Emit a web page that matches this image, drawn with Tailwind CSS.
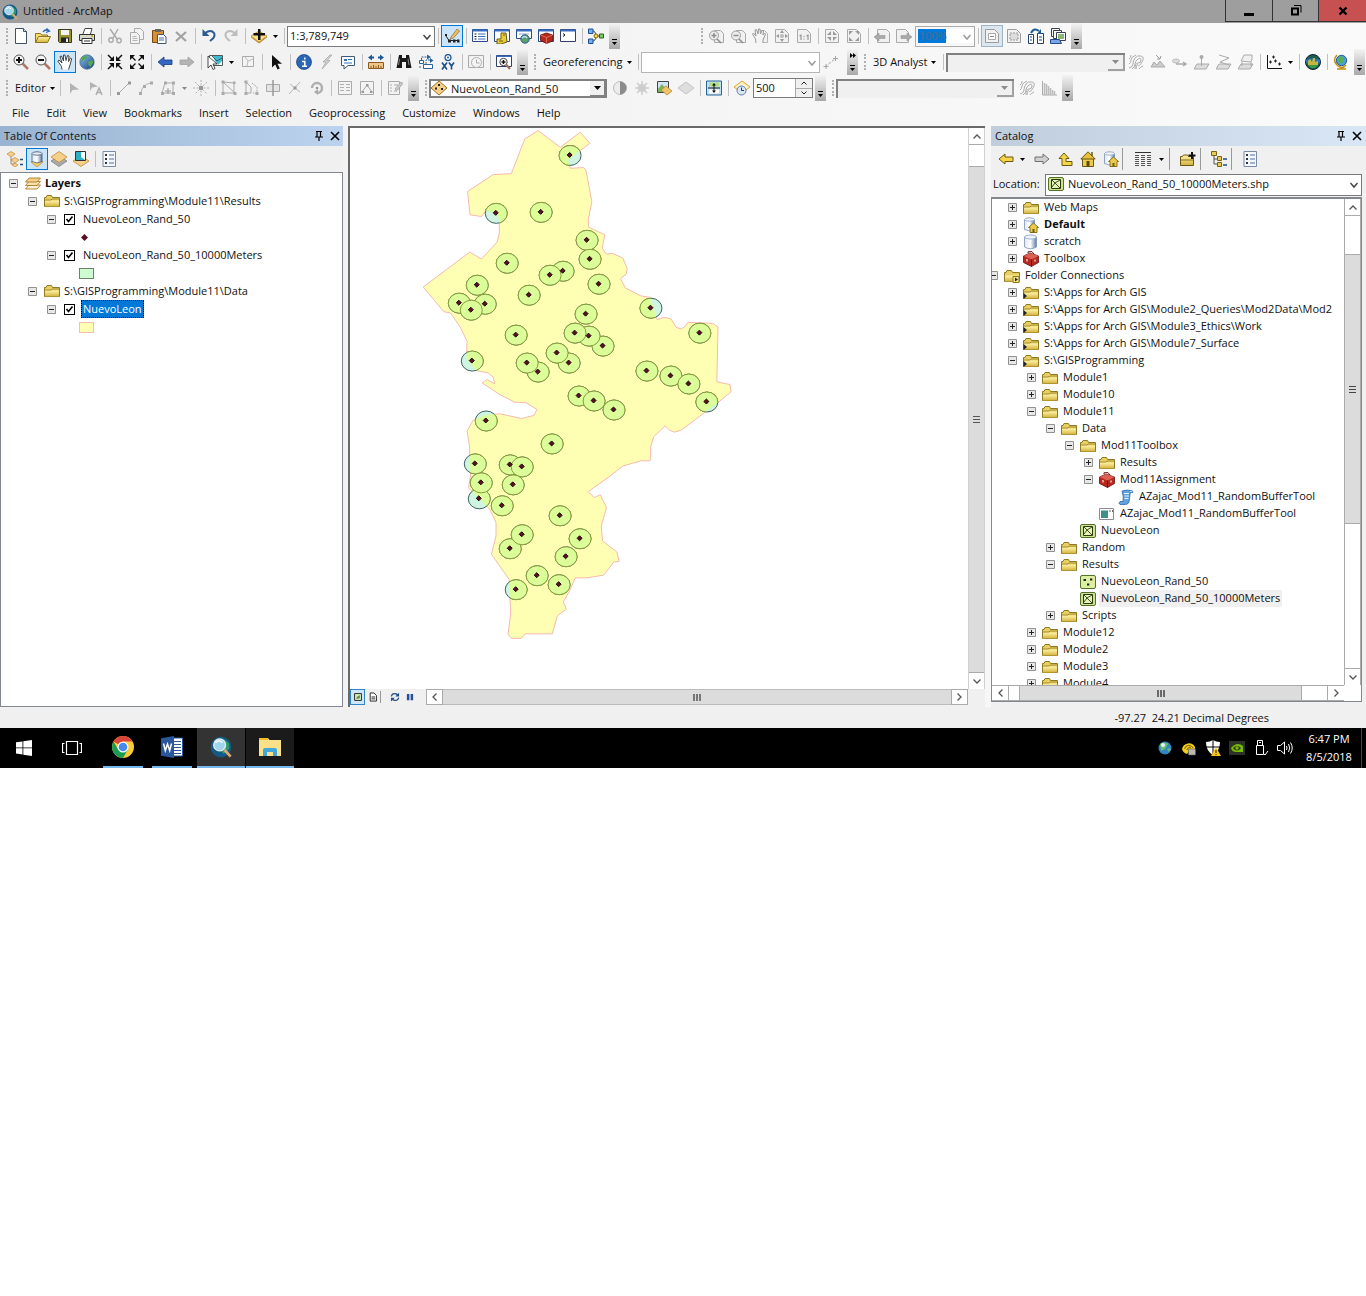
<!DOCTYPE html>
<html lang="en">
<head>
<meta charset="utf-8">
<title>Untitled - ArcMap</title>
<script src="https://cdn.jsdelivr.net/npm/@tailwindcss/browser@4"></script>
</head>
<body class="min-h-screen bg-white font-['Open_Sans','Noto_Sans',sans-serif] text-[11px] text-[#111]">

<svg class="absolute size-0" aria-hidden="true">
  <defs>
    <linearGradient id="gGlobe" x1="0" y1="0" x2="1" y2="1"><stop offset="0" stop-color="#8ec6ee"/><stop offset="1" stop-color="#123f80"/></linearGradient>
    <linearGradient id="gFold" x1="0" y1="0" x2="0" y2="1"><stop offset="0" stop-color="#fff3a8"/><stop offset="1" stop-color="#d3b23c"/></linearGradient>
    <linearGradient id="gCyl" x1="0" y1="0" x2="1" y2="0"><stop offset="0" stop-color="#dfe9f6"/><stop offset=".5" stop-color="#fff"/><stop offset="1" stop-color="#5a7bb0"/></linearGradient>
  </defs>
  <symbol id="new" viewBox="0 0 16 16"><path d="M2.500 .5h8l3 3v12h-11z" fill="#fff" stroke="#3f4f66"/><path d="M10.500 .5v3h3" fill="#cfdcf0" stroke="#3f4f66"/></symbol>
  <symbol id="open" viewBox="0 0 16 16"><path d="M.5 14.500v-9h5l1 1.500h6v2" fill="#f5dc6e" stroke="#8a7420"/><path d="M.5 14.500l3-6h12l-3 6z" fill="url(#gFold)" stroke="#8a7420"/><path d="M8 4q2-3 5-1.500M11.500 .5l3 2.500-3.500 1.500" fill="none" stroke="#2a66b0" stroke-width="1.300"/></symbol>
  <symbol id="save" viewBox="0 0 16 16"><path d="M1.500 1.500h13v13h-12l-1-1z" fill="#9a9330" stroke="#3b3a1c"/><path d="M4 2h8v5H4z" fill="#f4f4f4"/><path d="M4 9.500h8V14H4z" fill="#222"/><path d="M9 10.500h2V14H9z" fill="#eee"/></symbol>
  <symbol id="print" viewBox="0 0 16 16"><path d="M4 6l2-5.500h7L11.500 6" fill="#fff" stroke="#444"/><path d="M.5 6.500h15v6H.5z" fill="#d8d8cc" stroke="#333"/><path d="M3 10.500h10v5H3z" fill="#fff" stroke="#333"/><path d="M5 13h6" stroke="#333"/><path d="M12 8h2" stroke="#c9a800" stroke-width="1.500"/></symbol>
  <symbol id="cut" viewBox="0 0 16 16"><g fill="none" stroke="#a9a9a9" stroke-width="1.400"><path d="M3 1l7 10M11 1L6 10"/><circle cx="4" cy="12" r="2.200"/><circle cx="12" cy="12.500" r="2.200"/></g></symbol>
  <symbol id="copy" viewBox="0 0 16 16"><g fill="#f3f3f3" stroke="#a9a9a9"><path d="M5.500 .5h6l3 3v8h-9z"/><path d="M1.500 4.500h6l3 3v8h-9z"/></g><path d="M3.500 8.500h4M3.500 10.500h5M3.500 12.500h5" stroke="#b5b5b5"/></symbol>
  <symbol id="paste" viewBox="0 0 16 16"><path d="M1.500 2.500h11v12h-11z" fill="#d79035" stroke="#7a4a10"/><path d="M4 1h6v3H4z" fill="#666"/><path d="M6.500 6.500h6l2.500 2.500v6.500H6.500z" fill="#fff" stroke="#40557a"/><path d="M8 10h5M8 12h5" stroke="#4a6ea8"/></symbol>
  <symbol id="del" viewBox="0 0 16 16"><path d="M3 4l10 9M13 4L3 13" stroke="#a2a2a2" stroke-width="2.200"/></symbol>
  <symbol id="undo" viewBox="0 0 16 16"><path d="M4 5q6-4 9 0 2 4-4 8" fill="none" stroke="#2b5a94" stroke-width="2"/><path d="M1.500 1v7h7z" fill="#2b5a94"/></symbol>
  <symbol id="redo" viewBox="0 0 16 16"><path d="M12 5Q6 1 3 5q-2 4 4 8" fill="none" stroke="#bdbdbd" stroke-width="2"/><path d="M14.500 1v7h-7z" fill="#bdbdbd"/></symbol>
  <symbol id="adddata" viewBox="0 0 16 16"><path d="M0 8v1.500l8 6 8-6V8l-8 6z" fill="#b98a34"/><path d="M0 8l8-5 8 5-8 6z" fill="#ffe08a" stroke="#c99a3c"/><path d="M7 1h2.500v4H14v2.500H9.500V12H7V7.500H2.500V5H7z" fill="#111"/></symbol>
  <symbol id="edtool" viewBox="0 0 16 16"><path d="M2 8l3 4.500h9" fill="none" stroke="#222"/><path d="M1 6h2v2H1zM4 11.500h3v3H4zM9 11.500h2.500v3H9zM13 11.500h2.500v3H13z" fill="#222"/><path d="M7 9l6-8 2.500 2-6 7-3 1z" fill="#f0c060" stroke="#8a6a30" stroke-width=".7"/></symbol>
  <symbol id="wtoc" viewBox="0 0 16 16"><path d="M.5 1.500h15v12H.5z" fill="#fff" stroke="#274b8c"/><path d="M.5 1.500h15v2H.5z" fill="#3a6cc0"/><path d="M2.500 6h2M2.500 8.500h2M2.500 11h2" stroke="#111"/><path d="M6 6h7.500M6 8.500h7.500M6 11h7.500" stroke="#3a6cc0"/></symbol>
  <symbol id="wcat" viewBox="0 0 16 16"><path d="M.5 1.500h15v12H.5z" fill="#fff" stroke="#274b8c"/><path d="M.5 1.500h15v2H.5z" fill="#3a6cc0"/><path d="M7 5h5l1 9-6 2H3v-5h4z" fill="#e8cc38" stroke="#6b5a10"/><path d="M5 13h4M9 7h2" stroke="#6b5a10"/></symbol>
  <symbol id="wsearch" viewBox="0 0 16 16"><path d="M.5 1.500h15v9H.5z" fill="#fff" stroke="#274b8c"/><path d="M.5 1.500h15v2H.5z" fill="#3a6cc0"/><path d="M3 6h10" stroke="#90a8c8"/><circle cx="9" cy="11" r="4.200" fill="#5aa070" stroke="#2a5a80"/><path d="M6 10q3-3 5 0" fill="none" stroke="#bfe0f5" stroke-width="1.500"/></symbol>
  <symbol id="wtool" viewBox="0 0 16 16"><path d="M.5 1.500h15v12H.5z" fill="#fff" stroke="#274b8c"/><path d="M.5 1.500h15v2H.5z" fill="#3a6cc0"/><path d="M2.500 7l6-2 6 2v6l-6 2.500-6-3z" fill="#b8261c" stroke="#5e0e0a" stroke-width=".8"/><path d="M2.500 7l6 2.500 6-2.500M8.500 9.500v6" fill="none" stroke="#ef8a7e" stroke-width=".7"/></symbol>
  <symbol id="wpy" viewBox="0 0 16 16"><path d="M.5 1.500h15v12H.5z" fill="#fff" stroke="#333f66"/><path d="M.5 1.500h15v2H.5z" fill="#3a6cc0"/><path d="M3 5.500l2 1.500-2 1.500" fill="none" stroke="#111"/></symbol>
  <symbol id="model" viewBox="0 0 16 16"><path d="M4 3q4 0 4 5M4 13q4 0 4-5h5" fill="none" stroke="#333"/><path d="M.5 1h4.500v4.500H.5zM.5 11h4.500v4.500H.5z" fill="#6fb1f0" stroke="#1f4f94"/><circle cx="8" cy="8" r="2" fill="#f5d64a" stroke="#8a6a10"/><path d="M11.500 6h4v4h-4z" fill="#7ccb62" stroke="#2a6a20"/></symbol>
  <symbol id="lzin" viewBox="0 0 16 16"><path d="M6.500 2.500h6l3 3v9h-9z" fill="#f1f1f1" stroke="#a9a9a9"/><circle cx="6" cy="7.500" r="4.500" fill="#eee" stroke="#9c9c9c"/><path d="M3.500 7.500h5M6 5v5M9 11l4 4" stroke="#8d8d8d" stroke-width="1.500"/></symbol>
  <symbol id="lzout" viewBox="0 0 16 16"><path d="M6.500 2.500h6l3 3v9h-9z" fill="#f1f1f1" stroke="#a9a9a9"/><circle cx="6" cy="7.500" r="4.500" fill="#eee" stroke="#9c9c9c"/><path d="M3.500 7.500h5M9 11l4 4" stroke="#8d8d8d" stroke-width="1.500"/></symbol>
  <symbol id="lpan" viewBox="0 0 16 16"><path d="M6.500 2.500h6l3 3v9h-9z" fill="#f1f1f1" stroke="#b5b5b5"/><path d="M4 15l-.5-4-3-5 1-1 2.500 3L3 2l1.500-.5L6 6l.5-5H8l.5 5L10 2.500h1.500L11 7l1.500-2L13.500 6 11 12v3" fill="#f4f4f4" stroke="#999"/></symbol>
  <symbol id="lfull" viewBox="0 0 16 16"><path d="M1.500 1.500h9l4 4v9h-13z" fill="#f1f1f1" stroke="#aaa"/><path d="M8 2l2 3H6zM8 14l2-3H6zM2 8l3-2v4zM14 8l-3-2v4z" fill="#999"/><circle cx="8" cy="8" r="2" fill="#bbb"/></symbol>
  <symbol id="l11" viewBox="0 0 16 16"><path d="M1.500 1.500h9l4 4v9h-13z" fill="#f1f1f1" stroke="#aaa"/><path d="M3.500 8l1.500-1v5M10.500 8l1.500-1v5M8 8v1M8 10.500v1" stroke="#999" stroke-width="1.200" fill="none"/></symbol>
  <symbol id="lfixin" viewBox="0 0 16 16"><path d="M1.500 1.500h9l4 4v9h-13z" fill="#f1f1f1" stroke="#aaa"/><path d="M7 3v4H3zM9 3v4h4zM7 13V9H3zM9 13V9h4z" fill="#999"/></symbol>
  <symbol id="lfixout" viewBox="0 0 16 16"><path d="M1.500 1.500h9l4 4v9h-13z" fill="#f1f1f1" stroke="#aaa"/><path d="M3 3h4L3 7zM13 3H9l4 4zM3 13h4L3 9zM13 13H9l4-4z" fill="#999"/></symbol>
  <symbol id="lback" viewBox="0 0 16 16"><path d="M3.500 1.500h9l3 3v10h-12z" fill="#f1f1f1" stroke="#aaa"/><path d="M0 9l5-4v2.500h6v3H5V13z" fill="#aaa" stroke="#888" stroke-width=".5"/></symbol>
  <symbol id="lfwd" viewBox="0 0 16 16"><path d="M.5 1.500h9l3 3v10H.5z" fill="#f1f1f1" stroke="#aaa"/><path d="M16 9l-5-4v2.500H5v3h6V13z" fill="#aaa" stroke="#888" stroke-width=".5"/></symbol>
  <symbol id="draft" viewBox="0 0 16 16"><path d="M1.500 1.500h9l4 4v9h-13z" fill="#f1f1f1" stroke="#9c9c9c"/><path d="M4.500 5.500h7v6h-7z" fill="#fff" stroke="#aaa"/><path d="M6 8.500h4" stroke="#888"/></symbol>
  <symbol id="focus" viewBox="0 0 16 16"><path d="M1.500 1.500h9l4 4v9h-13z" fill="#f1f1f1" stroke="#9c9c9c"/><path d="M4 5h8v7H4z" fill="#ddd" stroke="#999" stroke-dasharray="2 1"/></symbol>
  <symbol id="chlay" viewBox="0 0 16 16"><path d="M.5 6.500h5v9h-5zM9.500 5.500h6v10h-6z" fill="#fff" stroke="#2e3f66"/><path d="M2 9h2M2 12h2M11 9h3M11 12h3" stroke="#5b83b8" stroke-width="1.500"/><path d="M3 5q3-6 8-2" fill="none" stroke="#1d5b96" stroke-width="2"/><path d="M13 1v5H9z" fill="#1d5b96"/></symbol>
  <symbol id="ddp" viewBox="0 0 16 16"><g fill="#fff" stroke="#3a3f4d"><path d="M1.500 .5h8v8h-8z"/><path d="M3.500 2.500h8v8h-8z"/><path d="M6.500 4.500h9v8h-9z"/></g><path d="M8 6h6v5H8z" fill="#8db57a"/><path d="M.5 11.500h9l2 4H.5z" fill="#7aa6e6" stroke="#244a92"/></symbol>
  <symbol id="zin" viewBox="0 0 16 16"><path d="M9.500 9.500l5.500 5.500" stroke="#b07a6a" stroke-width="2.500"/><circle cx="6" cy="6" r="5" fill="#f4f4f4" stroke="#555"/><path d="M3 6h6M6 3v6" stroke="#111" stroke-width="2"/></symbol>
  <symbol id="zout" viewBox="0 0 16 16"><path d="M9.500 9.500l5.500 5.500" stroke="#b07a6a" stroke-width="2.500"/><circle cx="6" cy="6" r="5" fill="#f4f4f4" stroke="#555"/><path d="M3 6h6" stroke="#111" stroke-width="2"/></symbol>
  <symbol id="pan" viewBox="0 0 16 16"><path d="M5 15.500l-.5-3L.8 7 2 6l3 3L3 2.500 4.500 2l2 5L6.500 1H8l1 5.500L10.500 1.500 12 2l-.5 5.500L13.500 4l1.200.8L13 11l-1.500 4.500" fill="#fff" stroke="#333" stroke-width=".9"/></symbol>
  <symbol id="globe" viewBox="0 0 16 16"><circle cx="8" cy="8" r="7.200" fill="url(#gGlobe)" stroke="#2a4f80" stroke-width=".6"/><path d="M3 3.500q3-2.500 5-2l-1 3.500-3 1-1.500 3q-1-3 .5-5.500zM9 8l4-2 1.500 2-3 5-2-2z" fill="#5aa84a"/></symbol>
  <symbol id="fixin" viewBox="0 0 16 16"><path d="M7 2v5H2zM9 2v5h5zM7 14V9H2zM9 14V9h5z" fill="#111"/><path d="M1 1l4 4M15 1l-4 4M1 15l4-4M15 15l-4-4" stroke="#111" stroke-width="1.500"/></symbol>
  <symbol id="fixout" viewBox="0 0 16 16"><path d="M1 1h5L1 6zM15 1h-5l5 5zM1 15h5l-5-5zM15 15h-5l5-5z" fill="#111"/><path d="M3 3l3.500 3.500M13 3L9.500 6.500M3 13l3.500-3.500M13 13L9.500 9.500" stroke="#111" stroke-width="1.300"/></symbol>
  <symbol id="back" viewBox="0 0 16 16"><path d="M1 8l6-5v3h8v4.500H7V13z" fill="#3568c4" stroke="#173a80" stroke-width=".8"/></symbol>
  <symbol id="fwd" viewBox="0 0 16 16"><path d="M15 8L9 3v3H1v4.500h8V13z" fill="#b4b4b4" stroke="#a0a0a0" stroke-width=".8"/></symbol>
  <symbol id="selfeat" viewBox="0 0 16 16"><path d="M2.500 1.500h13v10h-13z" fill="#fff" stroke="#555"/><path d="M6 2h9v5l-4 4-3-4z" fill="#3fbcd0"/><path d="M5 2l5 5 5-3" fill="none" stroke="#24606e"/><path d="M1 2v12l3-3 2 4.500 2-1L6 10h4z" fill="#fff" stroke="#222" stroke-width=".8"/></symbol>
  <symbol id="clrsel" viewBox="0 0 16 16"><path d="M2.500 2.500h11v10h-11z" fill="#f4f4f4" stroke="#aaa"/><path d="M5 3l3 4 5-2M8 7l-1 5" fill="none" stroke="#bbb"/></symbol>
  <symbol id="arrow" viewBox="0 0 16 16"><path d="M4 1v12.500l3.200-3 2.300 5 2.300-1-2.300-4.800H14z" fill="#111"/></symbol>
  <symbol id="ident" viewBox="0 0 16 16"><circle cx="8" cy="8" r="7.500" fill="#2a66b8" stroke="#143c7c" stroke-width=".7"/><path d="M8.800 3.500v2M6 7.500h2.800V12M6 12.200h5" stroke="#fff" stroke-width="1.600" fill="none"/></symbol>
  <symbol id="hyper" viewBox="0 0 16 16"><path d="M12 1L5 8h3l-4 7 8-8.500H9L14 1z" fill="#d0d0d0" stroke="#aaa" stroke-width=".8"/></symbol>
  <symbol id="popup" viewBox="0 0 16 16"><path d="M1.500 2.500h13v9H8l-4 3.500v-3.500H1.500z" fill="#fff" stroke="#3c5a78"/><path d="M4 5h3v2H4z" fill="#2d74b8"/><path d="M8 5.500h4M4 9h8" stroke="#2d74b8"/></symbol>
  <symbol id="measure" viewBox="0 0 16 16"><path d="M.5 8.500h15v6H.5z" fill="#f0c489" stroke="#8a5a20"/><path d="M3 12v2M5.500 11v3M8 12v2M10.500 11v3M13 12v2" stroke="#8a5a20"/><path d="M3 3.500h3M10 3.500h3" stroke="#1d5b96" stroke-width="2"/><path d="M0 3.500L4 .5v6zM16 3.500L12 .5v6z" fill="#1d5b96"/></symbol>
  <symbol id="find" viewBox="0 0 16 16"><path d="M3 1h3v3h4V1h3l2.500 13H10V8H6v6H.5z" fill="#1a1a1a"/><path d="M3.500 5L2.500 11M12 5l1 6" stroke="#888"/></symbol>
  <symbol id="route" viewBox="0 0 16 16"><path d="M1.500 6.500h4v3h-4zM5.500 10.500h9v4h-9z" fill="#fff" stroke="#2a6496"/><path d="M3.500 6V3H10M8 10V6h5M1 13h3" stroke="#2a6496" fill="none" stroke-dasharray="2 1"/><path d="M9 .5L13 3 9 5.500zM12 4l3.500 2.500L12 9z" fill="#2a6496"/></symbol>
  <symbol id="goxy" viewBox="0 0 16 16"><circle cx="8" cy="3.500" r="3" fill="#fff" stroke="#1d5b96" stroke-width="1.300"/><circle cx="8" cy="3.500" r="1" fill="#1d5b96"/><path d="M2 8.500l5 7M7 8.500l-5 7M9 8.500l2.500 3.500 2.500-3.500M11.500 12v3.500" stroke="#1d4f86" stroke-width="1.600" fill="none"/></symbol>
  <symbol id="time" viewBox="0 0 16 16"><path d="M.5 1.500h15v12H.5z" fill="#f2f2f2" stroke="#aaa"/><circle cx="8.500" cy="8.500" r="5" fill="#f4f4f4" stroke="#b0b0b0"/><path d="M8.500 5.500v3.500h3" stroke="#aaa" fill="none"/></symbol>
  <symbol id="viewer" viewBox="0 0 16 16"><path d="M.5 1.500h15v11H.5z" fill="#fff" stroke="#333f66"/><path d="M.5 1.500h15v1.500H.5z" fill="#3a6cc0"/><circle cx="7.500" cy="8" r="3.700" fill="#fff" stroke="#444"/><path d="M5.500 8h4M7.500 6v4" stroke="#111" stroke-width="1.400"/><path d="M10.500 11l3.500 4" stroke="#a06a5a" stroke-width="2"/></symbol>
  <symbol id="ctrl" viewBox="0 0 16 16"><path d="M2 13L13 4" stroke="#a8a8a8" stroke-dasharray="3 1.500"/><path d="M.5 12.500h5M3 10v5M10 4.500h5M12.500 2v5" stroke="#a8a8a8"/></symbol>
  <symbol id="contour" viewBox="0 0 16 16"><g fill="none" stroke="#adadad"><path d="M1 14q4-1 4-4t2-6 6-2 1 6-4 3-2 4"/><path d="M4 15q3-2 3-5t3-5 3 1-3 3-3 6"/><path d="M1 10q2-1 2-4t5-5M1 5q2-1 2-4M11 15q1-2 4-3"/></g></symbol>
  <symbol id="steep" viewBox="0 0 16 16"><path d="M1 13l3-5 3 3 3-4 5 6z" fill="#ccc" stroke="#aaa"/><path d="M6 1l4 4M10 5l1-3M10 5H7" stroke="#999"/></symbol>
  <symbol id="los" viewBox="0 0 16 16"><ellipse cx="4" cy="7" rx="3.500" ry="2" fill="#ddd" stroke="#bbb"/><path d="M4 10h10M11 8l3 2-3 2" stroke="#aaa" stroke-width="1.500" fill="none"/></symbol>
  <symbol id="ipt" viewBox="0 0 16 16"><path d="M3 10h12l-3 5H0z" fill="#ddd" stroke="#aaa"/><path d="M7.500 4v8" stroke="#aaa"/><circle cx="7.500" cy="3" r="2" fill="#aaa"/></symbol>
  <symbol id="iline" viewBox="0 0 16 16"><path d="M3 10h12l-3 5H0z" fill="#ddd" stroke="#aaa"/><path d="M3 1l10 3-9 4 9 3" fill="none" stroke="#aaa"/></symbol>
  <symbol id="ipoly" viewBox="0 0 16 16"><path d="M3 10h12l-3 5H0z" fill="#ddd" stroke="#aaa"/><path d="M3 7l3-6h8v5l-2 2zM4 8v4M13 7v5" fill="#f0f0f0" stroke="#aaa"/></symbol>
  <symbol id="graph" viewBox="0 0 16 16"><path d="M1.500 1v13.500H16" fill="none" stroke="#111"/><path d="M3 8h3M4.500 6.500v3M6 3h3M7.500 1.500v3M8 7h3M9.500 5.500v3M12 10h3M13.500 8.500v3" stroke="#222"/></symbol>
  <symbol id="scene" viewBox="0 0 16 16"><circle cx="8" cy="8" r="7.500" fill="#1c5d54" stroke="#123"/><path d="M1 8q7-3 14 0" stroke="#2a76c0" stroke-width="4" fill="none"/><path d="M3 7l2-2 2 3 1-4h2v4l3-1v4H3z" fill="#c6b440"/><path d="M3 11h10l-3 3H6z" fill="#3c9a44"/></symbol>
  <symbol id="arcglobe" viewBox="0 0 16 16"><circle cx="8.500" cy="6.500" r="5.200" fill="#4b9fdc" stroke="#1d5b96"/><path d="M7 2l4 2-1 4-3 2-2-4z" fill="#58b04a"/><path d="M4 1q-5 5 0 10t9 0M8 13v2M4 15h9" fill="none" stroke="#c58e10" stroke-width="1.500"/></symbol>
  <symbol id="ea" viewBox="0 0 16 16"><path d="M4 3v11l2.500-4 6.500-.5z" fill="#b3b3b3"/></symbol>
  <symbol id="eann" viewBox="0 0 16 16"><path d="M2 2v9l2-3.500 6-1z" fill="#b3b3b3"/><path d="M8 15l3-7 3 7M9 12.500h4" stroke="#aaa" stroke-width="1.400" fill="none"/></symbol>
  <symbol id="sline" viewBox="0 0 16 16"><path d="M3 13L13 3" stroke="#aaa"/><path d="M1 12h3v3H1zM12 1.500h3v3h-3z" fill="#999"/></symbol>
  <symbol id="sarc" viewBox="0 0 16 16"><path d="M3 13Q4 4 13 3" stroke="#b5b5b5" fill="none"/><path d="M1 12h3v3H1zM5 5h3v3H5zM12 1.500h3v3h-3z" fill="#aaa"/></symbol>
  <symbol id="strace" viewBox="0 0 16 16"><path d="M2 13L5 3h8v10z" fill="none" stroke="#aaa"/><path d="M4 1.500h3v3H4zM12 1.500h3v3h-3zM1 12h3v3H1zM12 12h3v3h-3z" fill="#aaa"/><path d="M5 11h6M8 8v6" stroke="#999"/></symbol>
  <symbol id="spoint" viewBox="0 0 16 16"><path d="M8 0v16M0 8h16M2 2l12 12M14 2L2 14" stroke="#b0b0b0" stroke-dasharray="2 1.500"/><path d="M6 6h4v4H6z" fill="#999"/></symbol>
  <symbol id="evert" viewBox="0 0 16 16"><path d="M2 2v11h12zM2 2l11 1v10" fill="none" stroke="#aaa"/><path d="M.5 .5h3v3h-3zM12 1.500h2.500V4H12zM.5 12h3v3h-3zM12.500 12h3v3h-3z" fill="#aaa"/></symbol>
  <symbol id="reshape" viewBox="0 0 16 16"><path d="M3 2v11h5V7z" fill="none" stroke="#aaa"/><path d="M9 3l5 4v6h-4" stroke="#aaa" stroke-dasharray="2 1" fill="none"/><path d="M1.500 .5h3v3h-3zM1.500 12h3v3h-3zM12.500 12h3v3h-3z" fill="#aaa"/></symbol>
  <symbol id="cutp" viewBox="0 0 16 16"><path d="M1.500 4.500h13v7h-13z" fill="#e4e4e4" stroke="#aaa"/><path d="M8 0v16" stroke="#999" stroke-width="1.500"/></symbol>
  <symbol id="split" viewBox="0 0 16 16"><path d="M2 14L13 2M3 4l10 8" stroke="#b5b5b5"/><path d="M6.500 6.500h3v3h-3z" fill="#999"/></symbol>
  <symbol id="rotate" viewBox="0 0 16 16"><path d="M3 8a5 5 0 1 1 6 5" fill="none" stroke="#b0b0b0" stroke-width="2.500"/><path d="M9 9v6l-4-3z" fill="#aaa"/><circle cx="8" cy="8" r="1.300" fill="#999"/></symbol>
  <symbol id="attr" viewBox="0 0 16 16"><path d="M1.500 1.500h13v13h-13z" fill="#f3f3f3" stroke="#aaa"/><path d="M3 4.500h4M3 7.500h4M3 10.500h4M9 4.500h4M9 7.500h4M9 10.500h4" stroke="#b0b0b0"/></symbol>
  <symbol id="sprop" viewBox="0 0 16 16"><path d="M1.500 1.500h13v13h-13z" fill="#f3f3f3" stroke="#aaa"/><path d="M3 12l5-7 5 7" fill="none" stroke="#aaa"/><path d="M7 4h2.500v2.500H7zM2.500 11H5v2H2.500zM11 11h2.500v2H11z" fill="#999"/></symbol>
  <symbol id="cfeat" viewBox="0 0 16 16"><path d="M1.500 1.500h11v13h-11z" fill="#f3f3f3" stroke="#aaa"/><path d="M3 5h2M3 8h2M3 11h2M7 5h4M7 11h3" stroke="#aaa"/><path d="M8 9l6-7 2 1.500-6 7z" fill="#ccc" stroke="#999" stroke-width=".7"/></symbol>
  <symbol id="contrast" viewBox="0 0 16 16"><circle cx="8" cy="8" r="6.500" fill="#ececec" stroke="#bbb"/><path d="M8 1.500a6.500 6.500 0 0 1 0 13z" fill="#8c8c8c"/></symbol>
  <symbol id="bright" viewBox="0 0 16 16"><circle cx="8" cy="8" r="4" fill="#d0d0d0"/><path d="M8 1v14M1 8h14M3 3l10 10M13 3L3 13" stroke="#ccc" stroke-width="1.500"/></symbol>
  <symbol id="transp" viewBox="0 0 16 16"><path d="M1.500 1.500h11v11h-11z" fill="#cfe4f4" stroke="#444"/><path d="M2 9l4-5 6 8H2z" fill="#7fb35a"/><path d="M5 10l5-4 6 5-5 4z" fill="#f0c36a" stroke="#b0802a" stroke-width=".7"/></symbol>
  <symbol id="dia" viewBox="0 0 16 16"><path d="M0 8l8-6 8 6-8 6z" fill="#dedede" stroke="#c2c2c2"/></symbol>
  <symbol id="swipe" viewBox="0 0 16 16"><path d="M.5 1h15v14H.5z" fill="#bfe0f5" stroke="#2a6496"/><path d="M3 2.500h10v4H3z" fill="#b4dc80"/><path d="M3 9.500h10v4H3z" fill="#fff"/><path d="M2 8h12M8 4v8" stroke="#111"/><path d="M8 3L6 5.500h4zM8 13l-2-2.500h4z" fill="#111"/></symbol>
  <symbol id="flick" viewBox="0 0 16 16"><path d="M0 7l8-6 8 6-8 6z" fill="#fff1c8" stroke="#e0a030"/><circle cx="7.500" cy="10.500" r="4.500" fill="#d6e6f6" stroke="#5f7fa8"/><path d="M7.500 7.500v3H10" stroke="#335" fill="none"/></symbol>
  <symbol id="hist" viewBox="0 0 16 16"><path d="M1.500 1v14H16" stroke="#aaa" fill="none"/><path d="M3.500 15V3M5.500 15V4M7.500 15V6M9.500 15V8M11.500 15v-5M13.500 15v-4" stroke="#bbb" stroke-width="1.500"/></symbol>

  <symbol id="ldraw" viewBox="0 0 16 16"><path d="M4 6v7h4M4 9h4" fill="none" stroke="#8a8a8a"/><path d="M0 3l4-2.500L8 3 4 6zM4 9l4-2.500L12 9l-4 3zM5 14l3-2 3 2-3 2z" fill="#f6cf88" stroke="#c08a3c" stroke-width=".7"/><path d="M13 8.500h3M13 13.500h3" stroke="#1d4f86" stroke-width="1.700"/></symbol>
  <symbol id="lsource" viewBox="0 0 16 16"><path d="M2 11l6-4 6 4-6 5z" fill="#f6cf68" stroke="#c08a3c" stroke-width=".8"/><path d="M3 2.500q5-3 10 0v8q-5 3-10 0z" fill="url(#gCyl)" stroke="#44577a" stroke-width=".8"/><ellipse cx="8" cy="2.500" rx="5" ry="1.700" fill="#e6eef8" stroke="#44577a" stroke-width=".8"/></symbol>
  <symbol id="lvis" viewBox="0 0 16 16"><path d="M0 10l8-5 8 5-8 5.500z" fill="#aaa" stroke="#777" stroke-width=".7"/><path d="M0 6l8-5.500L16 6l-8 5.500z" fill="#f6cf88" stroke="#c08a3c" stroke-width=".8"/></symbol>
  <symbol id="lsel" viewBox="0 0 16 16"><path d="M0 10l8-5 8 5-8 5.500z" fill="#f6cf88" stroke="#c08a3c" stroke-width=".8"/><path d="M2.500 .5h10v9h-10z" fill="#2eb0c4" stroke="#333"/><path d="M8 1h4v8l-4-3z" fill="#fff"/></symbol>
  <symbol id="opts" viewBox="0 0 16 16"><path d="M2 .5h12.500v15H2z" fill="#f4f8fd" stroke="#7a8ba6"/><path d="M4 3h2v2H4zM4 7h2v2H4zM4 11h2v2H4z" fill="#333"/><path d="M8 4h5M8 8h5M8 12h5" stroke="#4a6ea8"/></symbol>
  <symbol id="layers" viewBox="0 0 16 16"><g stroke="#b07c2c" stroke-width=".9"><path d="M.5 14L4 10h11.500L12 14z" fill="#fff1d2"/><path d="M.5 10.500L4 6.500h11.500L12 10.500z" fill="#fbe0ac"/><path d="M.5 7L4 3h11.500L12 7z" fill="#f6cf88"/></g></symbol>
  <symbol id="folder" viewBox="0 0 16 16"><path d="M.5 13.500v-9h1.500l1-2h4.500l1 2h7v9z" fill="#e9cf62" stroke="#8f7a24"/><path d="M1 13.500v-6h14v6z" fill="url(#gFold)"/><path d="M1 7h6l1-1h7" stroke="#a38e34" fill="none"/></symbol>
  <symbol id="fconn" viewBox="0 0 16 16"><path d="M.5 13.500v-9h1.500l1-2h4.500l1 2h7v9z" fill="#e9cf62" stroke="#8f7a24"/><path d="M1 13.500v-6h14v6z" fill="url(#gFold)"/><path d="M1 7h6l1-1h7" stroke="#a38e34" fill="none"/><path d="M.5 8l3.500 3-3.500 3z" fill="#222"/></symbol>
  <symbol id="fconns" viewBox="0 0 16 16"><path d="M.5 13.500v-9h1.500l1-2h4.500l1 2h7v9z" fill="#e9cf62" stroke="#8f7a24"/><path d="M1 13.500v-6h14v6z" fill="url(#gFold)"/><path d="M9 8.500h6v6H9z" fill="#f6e48a" stroke="#8f7a24"/><path d="M11 9.500l3 2-3 2z" fill="#222"/></symbol>
  <symbol id="db" viewBox="0 0 16 16"><path d="M1.500 3q6-3.500 12 0v10q-6 3.500-12 0z" fill="url(#gCyl)" stroke="#7b91b6" stroke-width=".8"/><ellipse cx="7.500" cy="3" rx="6" ry="2" fill="#eef3fa" stroke="#8fa3c4" stroke-width=".8"/></symbol>
  <symbol id="dbhome" viewBox="0 0 16 16"><path d="M1.500 2.500q5-3 10 0v10q-5 3-10 0z" fill="url(#gCyl)" stroke="#7b91b6" stroke-width=".8"/><ellipse cx="6.500" cy="2.500" rx="5" ry="1.700" fill="#eef3fa" stroke="#8fa3c4" stroke-width=".8"/><path d="M5.500 10.500l5-4.500 5 4.500h-1.500v5H7v-5z" fill="#eccb4a" stroke="#7a6414" stroke-width=".9"/><path d="M9.500 12h2v3.500h-2z" fill="#6b5a10"/></symbol>
  <symbol id="tbx" viewBox="0 0 16 16"><path d="M.5 5L7 2l8.500 3v6.500l-7 4-8-4z" fill="#b8281e" stroke="#641410" stroke-width=".8"/><path d="M.5 5l8 3.500 7-3.500L7 2z" fill="#dd6054"/><path d="M8.500 8.500v7M5 2V.8L9 .6 11 3" stroke="#641410" fill="none"/><path d="M4 8v2.500M12 8.500v2" stroke="#eee" stroke-width="1.200"/></symbol>
  <symbol id="script" viewBox="0 0 16 16"><path d="M4 2q6-2 10 0-2 1-2 3t-1 8q-1 3-5 2.500H2q-2-1 0-3h3q1-5-1-10.500z" fill="#5fa3e2" stroke="#2d68ac" stroke-width=".8"/><path d="M6 4.500h5M6.500 7h4.500M6.500 9.500h4" stroke="#eaf4ff"/><path d="M12 1.500q3-.5 3 2h-3" fill="#cfe4f8" stroke="#2d68ac" stroke-width=".7"/></symbol>
  <symbol id="html" viewBox="0 0 16 16"><path d="M.5 2.500h14v11H.5z" fill="#fff" stroke="#8c8c94"/><path d="M2 4.500h7v7.500H2z" fill="#3f8f8a"/><path d="M10.500 5h1M13 5h1" stroke="#333" stroke-width="1.300"/></symbol>
  <symbol id="shp" viewBox="0 0 16 16"><rect x=".5" y="1.500" width="15" height="13" rx="1.500" fill="#cfe38e" stroke="#55702c"/><path d="M3.500 3.500h9v9h-9z" fill="#e6f4b8" stroke="#2b3a14"/><path d="M4 11l3-4 5-3M7 7L4 4M7 7l3 3 2 2" fill="none" stroke="#2b3a14" stroke-width=".9"/></symbol>
  <symbol id="shppt" viewBox="0 0 16 16"><rect x=".5" y="1.500" width="15" height="13" rx="1.500" fill="#dcefa0" stroke="#55702c"/><path d="M3.500 5H6v2H3.500zM10 4.500h2.300v2H10zM7 9.500h2.300v2H7z" fill="#222"/></symbol>
  <symbol id="yback" viewBox="0 0 16 16"><path d="M1 8l6-5v3h8v4.500H7V13z" fill="#f3d648" stroke="#6b5810"/></symbol>
  <symbol id="yfwd" viewBox="0 0 16 16"><path d="M15 8L9 3v3H1v4.500h8V13z" fill="#d0d0d0" stroke="#707070"/></symbol>
  <symbol id="yup" viewBox="0 0 16 16"><path d="M7 2L2 7.500h3v7h10v-4H9v-3h3z" fill="#f3d648" stroke="#6b5810"/></symbol>
  <symbol id="home" viewBox="0 0 16 16"><path d="M2.500 7v8.500h11V7" fill="#eccb4a" stroke="#6b5810"/><path d="M8 .8L.8 8h14.400z" fill="#e6c038" stroke="#6b5810"/><path d="M6.500 10h3v5.500h-3z" fill="#5a4a0e"/><path d="M12 1v4" stroke="#6b5810" stroke-width="1.500"/></symbol>
  <symbol id="grid" viewBox="0 0 16 16"><path d="M0 1.500h16" stroke="#333"/><path d="M0 4.500h16M0 6.500h16M0 8.500h16M0 10.500h16M0 12.500h16M0 14.500h16" stroke="#555" stroke-dasharray="4 2"/></symbol>
  <symbol id="connect" viewBox="0 0 16 16"><path d="M.5 14.500v-9h2l1-1.500h4l1 1.500h5v9z" fill="url(#gFold)" stroke="#6b5810"/><path d="M1 9h12" stroke="#8a7420"/><path d="M12 1v7M8.500 4.500h7" stroke="#111" stroke-width="2"/></symbol>
  <symbol id="ctree" viewBox="0 0 16 16"><path d="M3 5v8h4M3 8h4" stroke="#555" fill="none"/><path d="M.5 .5h5v4h-5zM6.500 5.500h4v4h-4zM6.500 11.500h4v4h-4z" fill="#e6cc50" stroke="#7a6414"/><path d="M12 8h4M12 14h4" stroke="#1d4f86" stroke-width="1.500"/></symbol>
  <symbol id="arcmap" viewBox="0 0 16 16"><circle cx="8" cy="8" r="7.500" fill="#145a86"/><path d="M9 2q6 2 5 7l-4 4-3-3z" fill="#2f9a6c"/><circle cx="7" cy="6.500" r="4.300" fill="#9fd4ec" stroke="#e4eef4"/><path d="M4 5q3-3 5 0" stroke="#fff" fill="none"/><path d="M10.500 10l4.500 5" stroke="#d8a878" stroke-width="2"/></symbol>
  <symbol id="mapview" viewBox="0 0 16 16"><path d="M2.500 2.500h11v11h-11z" fill="#d8ecc0" stroke="#222" stroke-width="1.500"/><path d="M5 11q1-5 6-6v5z" fill="#5f8f4e"/></symbol>
  <symbol id="layview" viewBox="0 0 16 16"><path d="M3.500 1.500h6l4 4v9h-10z" fill="#fff" stroke="#222" stroke-width="1.500"/><path d="M5.500 8h6M5.500 11h6" stroke="#222" stroke-width="1.500"/></symbol>
  <symbol id="refresh" viewBox="0 0 16 16"><path d="M2 7q2-6 8-4l3 2M14 9q-2 6-8 4l-3-2" fill="none" stroke="#1d4f86" stroke-width="2"/><path d="M14.500 1v6h-6zM1.500 15V9h6z" fill="#1d4f86"/></symbol>
  <symbol id="pause" viewBox="0 0 16 16"><path d="M3 3h4v10H3zM9 3h4v10H9z" fill="#24509a"/></symbol>
</svg>

<div class="w-full bg-linear-to-r from-[#f0f0f0] to-[#fafafa]">
  <header class="flex h-[23px] items-center bg-[#9e9e9e] pl-[2px]">
    <svg class="size-4"><use href="#arcmap"/></svg>
    <h1 class="ml-[5px] flex-1 text-[11px]">Untitled - ArcMap</h1>
    <div class="flex h-[22px] self-start border-b border-l border-[#333]">
      <button aria-label="Minimize" class="grid w-[47px] place-items-center border-r border-[#333]"><svg class="h-4 w-4" viewBox="0 0 16 16"><path d="M3 10h10v3H3z"/></svg></button>
      <button aria-label="Restore" class="grid w-[46px] place-items-center border-r border-[#333]"><svg class="h-4 w-4" viewBox="0 0 16 16"><path d="M4 5.500h6v6H4z" fill="none" stroke="#000" stroke-width="2"/><path d="M6 2.500h7v7" fill="none" stroke="#000"/></svg></button>
      <button aria-label="Close" class="grid w-[47px] place-items-center bg-[#c75050]"><svg class="h-4 w-4" viewBox="0 0 16 16"><path d="M4.500 4.500l7 7M11.500 4.500l-7 7" stroke="#000" stroke-width="2.400"/></svg></button>
    </div>
  </header>

  <div class="flex h-[26px] items-center overflow-hidden pl-1">
    <div class="flex items-center" data-tools="grip,new:New,open:Open,save:Save,print:Print,|,cut:Cut,copy:Copy,paste:Paste,del:Delete,|,undo:Undo,redo:Redo,|,adddata:Add Data,v,|"></div>
    <div class="relative h-[21px] w-[148px]">
      <select aria-label="Map scale" class="h-full w-full appearance-none border border-[#7a7a7a] bg-white pl-[2px]"><option>1:3,789,749</option></select>
      <svg class="pointer-events-none absolute top-[7px] right-1 h-2 w-2" viewBox="0 0 8 8"><path d="M.5 2L4 6l3.500-4" fill="none" stroke="#444" stroke-width="1.500"/></svg>
    </div>
    <div class="flex items-center" data-tools="|,edtool:Editor Toolbar:on,|,wtoc:Table Of Contents,wcat:Catalog,wsearch:Search,wtool:ArcToolbox,wpy:Python,|,model:ModelBuilder,over"></div>
    <div class="ml-[79px] flex items-center" data-tools="grip,lzin:Zoom In,lzout:Zoom Out,lpan:Pan,lfull:Zoom Whole Page,l11:Zoom to 100%,|,lfixin:Fixed Zoom In,lfixout:Fixed Zoom Out,|,lback:Go Back,lfwd:Go Forward"></div>
    <div class="relative h-[21px] w-[60px]">
      <select aria-label="Layout zoom" class="h-full w-full appearance-none border border-[#ababab] bg-[linear-gradient(to_right,#0078d7_28px,#fff_28px)] bg-[position:2px_2px] bg-[length:100%_14px] bg-no-repeat pl-[3px] text-[#4c6f94]"><option>100%</option></select>
      <svg class="pointer-events-none absolute top-[7px] right-1 h-2 w-2" viewBox="0 0 8 8"><path d="M.5 2L4 6l3.500-4" fill="none" stroke="#999" stroke-width="1.500"/></svg>
    </div>
    <div class="flex items-center" data-tools="|,draft:Toggle Draft Mode:dis,focus:Focus Data Frame,chlay:Change Layout,ddp:Data Driven Pages,over"></div>
  </div>

  <div class="flex h-[26px] items-center overflow-hidden pl-1">
    <div class="flex items-center" data-tools="grip,zin:Zoom In,zout:Zoom Out,pan:Pan:on,globe:Full Extent,|,fixin:Fixed Zoom In,fixout:Fixed Zoom Out,|,back:Back,fwd:Forward,|,selfeat:Select Features,v,clrsel:Clear Selection,|,arrow:Select Elements,|,ident:Identify,hyper:Hyperlink,popup:HTML Popup,|,measure:Measure,|,find:Find,route:Find Route,goxy:Go To XY,|,time:Time Slider,|,viewer:Viewer Window,over"></div>
    <div class="ml-1 flex items-center" data-tools="grip"></div>
    <button class="flex w-[97px] items-center gap-1 pl-[5px]">Georeferencing<svg class="h-[3px] w-[5px]" viewBox="0 0 5 3"><path d="M0 0h5L2.500 3z"/></svg></button>
    <div class="flex" data-tools="|"></div>
    <div class="relative h-[21px] w-[179px]">
      <select aria-label="Georeferencing layer" class="h-full w-full appearance-none border border-[#b5b5b5] bg-white"><option></option></select>
      <svg class="pointer-events-none absolute top-[7px] right-1 h-2 w-2" viewBox="0 0 8 8"><path d="M.5 2L4 6l3.500-4" fill="none" stroke="#999" stroke-width="1.500"/></svg>
    </div>
    <div class="flex w-[38px] items-center" data-tools="ctrl:Add Control Points,more"></div>
    <div class="ml-1 flex items-center" data-tools="grip"></div>
    <button class="flex w-[72px] items-center gap-1 pl-[5px]">3D Analyst<svg class="h-[3px] w-[5px]" viewBox="0 0 5 3"><path d="M0 0h5L2.500 3z"/></svg></button>
    <div class="flex" data-tools="|"></div>
    <div class="relative h-[19px] w-[179px]">
      <select aria-label="3D Analyst layer" class="h-full w-full appearance-none border-t-2 border-l-2 border-[#808080] bg-[#f0f0f0]"><option></option></select>
      <span class="pointer-events-none absolute top-[2px] right-0 grid h-[16px] w-[17px] place-items-center border-r-2 border-b-2 border-[#a0a0a0]"><svg class="h-[4px] w-[7px]" viewBox="0 0 7 4"><path d="M0 0h7L3.500 4z" fill="#8c8c8c"/></svg></span>
    </div>
    <div class="flex items-center" data-tools="contour:Contour,steep:Steepest Path,los:Line of Sight,ipt:Interpolate Point,iline:Interpolate Line,ipoly:Interpolate Polygon,|,graph:Profile Graph,v,|,scene:ArcScene,|,arcglobe:ArcGlobe,over"></div>
  </div>

  <div class="flex h-[26px] items-center overflow-hidden pl-1">
    <div class="flex items-center" data-tools="grip"></div>
    <button class="flex w-[47px] items-center gap-1 pl-[5px]">Editor<svg class="h-[3px] w-[5px]" viewBox="0 0 5 3"><path d="M0 0h5L2.500 3z"/></svg></button>
    <div class="flex items-center" data-tools="|,ea:Edit Tool,eann:Edit Annotation,|,sline:Straight Segment,sarc:Arc Segment,strace:Trace,vdis,spoint:Point,|,evert:Edit Vertices,reshape:Reshape,cutp:Cut Polygons,split:Split,rotate:Rotate,|,attr:Attributes,sprop:Sketch Properties,|,cfeat:Create Features,over"></div>
    <div class="ml-1 flex items-center" data-tools="grip"></div>
    <div class="relative h-[19px] w-[178px]">
      <select aria-label="Effects layer" class="h-full w-full appearance-none border-2 border-[#808080] bg-white pl-5"><option>NuevoLeon_Rand_50</option></select>
      <svg class="pointer-events-none absolute top-[1px] left-[2px] size-4" viewBox="0 0 16 16"><path d="M0 8l8-7 8 7-8 7z" fill="#f6cf88" stroke="#a07020"/><path d="M7 4h2v2H7zM4 7.500h2v2H4zM10 8h2v2h-2z" fill="#222"/></svg>
      <span class="pointer-events-none absolute top-[2px] right-[2px] grid h-[15px] w-[15px] place-items-center border-r border-b border-[#808080] bg-[#f0f0f0]"><svg class="h-[4px] w-[7px]" viewBox="0 0 7 4"><path d="M0 0h7L3.500 4z"/></svg></span>
    </div>
    <div class="ml-[2px] flex items-center" data-tools="contrast:Contrast,bright:Brightness,transp:Transparency,dia:Dim,|,swipe:Swipe,|,flick:Flicker"></div>
    <div class="flex h-[20px] w-[60px] border border-[#7a7a7a] bg-white">
      <input aria-label="Flicker rate" value="500" class="w-[41px] px-[2px] outline-none">
      <span class="flex flex-1 flex-col border-l border-[#aaa] bg-[#f0f0f0]">
        <button aria-label="Increase" class="grid flex-1 place-items-center border-b border-[#aaa]"><svg class="h-1 w-[6px]" viewBox="0 0 6 4"><path d="M.5 3.500L3 1l2.500 2.500" fill="none" stroke="#222"/></svg></button>
        <button aria-label="Decrease" class="grid flex-1 place-items-center"><svg class="h-1 w-[6px]" viewBox="0 0 6 4"><path d="M.5 .5L3 3 5.500 .5" fill="none" stroke="#222"/></svg></button>
      </span>
    </div>
    <div class="flex items-center" data-tools="over"></div>
    <div class="ml-1 flex items-center" data-tools="grip"></div>
    <div class="relative h-[19px] w-[178px]">
      <select aria-label="Spatial Analyst layer" class="h-full w-full appearance-none border-t-2 border-l-2 border-[#808080] bg-[#f0f0f0]"><option></option></select>
      <span class="pointer-events-none absolute top-[2px] right-0 grid h-[16px] w-[17px] place-items-center border-r-2 border-b-2 border-[#a0a0a0]"><svg class="h-[4px] w-[7px]" viewBox="0 0 7 4"><path d="M0 0h7L3.500 4z" fill="#8c8c8c"/></svg></span>
    </div>
    <div class="ml-[2px] flex items-center" data-tools="contour:Create Contour,hist:Histogram,over"></div>
  </div>

  <nav class="flex h-[25px] items-center gap-[17px] pl-3">
    <button>File</button><button>Edit</button><button>View</button><button>Bookmarks</button><button>Insert</button><button>Selection</button><button>Geoprocessing</button><button>Customize</button><button>Windows</button><button>Help</button>
  </nav>

  <main class="flex h-[581px] gap-[5px]">
    <section aria-label="Table Of Contents" class="flex w-[343px] shrink-0 flex-col bg-[#f0f0f0]">
      <div class="flex h-[20px] items-center bg-linear-to-r from-[#99b4d1] to-[#bcd3ee] pl-1">
        <h2 class="flex-1">Table Of Contents</h2>
        <button aria-label="Pin" class="w-4"><svg class="h-3 w-3" viewBox="0 0 12 12"><path d="M3 1.500h6M4 1.500v5M7.500 1.500v5M2 7h8M6 7v4" fill="none" stroke="#000" stroke-width="1.200"/></svg></button>
        <button aria-label="Close" class="w-[14px]"><svg class="h-3 w-3" viewBox="0 0 12 12"><path d="M2 2l8 8M10 2l-8 8" stroke="#000" stroke-width="1.600"/></svg></button>
      </div>
      <div class="flex h-[26px] items-center pl-1" data-tools="ldraw:List By Drawing Order,lsource:List By Source:on,lvis:List By Visibility,lsel:List By Selection,|,opts:Options"></div>
      <div class="flex-1 border border-[#828790] bg-white pt-px" id="toc"></div>
    </section>

    <section aria-label="Map" class="mr-px flex min-w-0 flex-1 flex-col border-t-2 border-l-2 border-[#696969] bg-white">
      <div class="flex min-h-0 flex-1">
        <svg class="h-full min-w-0 flex-1" viewBox="350 128 618 562" preserveAspectRatio="xMinYMin meet" role="img" aria-label="Nuevo Leon with 50 random points and their 10000 meter buffers">
          <defs><clipPath id="state"><use href="#outline"/></clipPath></defs>
          <path id="outline" fill="#ffffb3" stroke="#f6b9b0" d="M538.300 130.700L560.700 147.300 580.700 132.300 590.300 143.300 582.700 149 568.300 160 570.700 168.300 584 167.700 586.300 170 592.300 201.700 588.700 220 589 227.300 605.300 235 602.700 248.300 606.700 254.300 613.300 253.700 623.300 258.300 627.700 269 626.700 274.300 621 279 626 288.300 641.700 296.300 650.700 297.700 657.700 320 665 317.700 671.700 319.300 676.700 327.700 681.700 329.300 686 326.700 688.300 322.700 713.300 323.700 718.700 327.300 717.500 382.300 730.700 385 731.700 392.300 718.300 403.300 681.700 430.700 675 432.700 670 430.700 665.700 426.300 654.300 437.300 651.300 446.700 650.700 461.300 641.700 461.300 623.300 466.700 608.300 478.300 588.700 492.300 594.700 498.300 600.700 495.300 607 508.300 601.700 526.700 603 541.700 617.300 552.700 619.700 562.300 614.300 562.700 604 576 586.700 578.700 575.700 578.700 570 591.700 563.700 602.700 566.700 610 557.700 616.700 552.700 634.700 525.700 634.700 521.700 639.300 511.700 639.300 508.300 635 511 615 509.300 580 491.700 555 496.300 536.700 496.300 523.300 490 510 476.700 496.700 468.700 488.300 470.700 476.700 469.700 446.700 467.300 431.700 473.300 420.700 485 415.700 500 414.300 521.700 419 534.300 416 537.300 410 526.700 403.300 515 402.700 500 395 482.300 383.300 487.300 380 495 384.300 493.300 377.300 488.300 373.300 476.700 371 466.700 358.300 467.300 341.700 460 326.700 450.700 313.300 444 312 423.300 287.300 470 252.300 481.700 259.300 497.300 242.300 499.700 233.300 499.300 218.300 496 213.300 486 211 481.700 216.700 470.300 215 467.700 191.700 493.300 174.700 511.700 173.700 525 139z"/>
          <g id="outer" fill="#cff5e2" stroke="#3f5f60"></g>
          <g id="inner" clip-path="url(#state)" fill="#dbfe98" stroke="#8a9c3c"></g>
          <g id="dots" fill="#5c0f22" stroke="#1c0408"></g>
        </svg>
        <div class="flex w-[17px] shrink-0 flex-col border-x border-[#d0d0d0] bg-[#dcdcdc]">
          <button aria-label="Scroll up" class="grid h-[17px] place-items-center border-b border-[#aaa] bg-white"><svg class="h-[5px] w-[8px]" viewBox="0 0 8 5"><path d="M.5 4.500L4 1l3.500 3.500" fill="none" stroke="#555" stroke-width="1.300"/></svg></button>
          <div class="h-[22px] border-b border-[#aaa] bg-white"></div>
          <div class="grid flex-1 place-items-center"><svg class="h-[7px] w-[7px]" viewBox="0 0 7 7"><path d="M0 .5h7M0 3.500h7M0 6.500h7" stroke="#555"/></svg></div>
          <button aria-label="Scroll down" class="grid h-[17px] place-items-center border-t border-[#aaa] bg-white"><svg class="h-[5px] w-[8px]" viewBox="0 0 8 5"><path d="M.5 .5L4 4 7.500 .5" fill="none" stroke="#555" stroke-width="1.300"/></svg></button>
        </div>
      </div>
      <div class="flex h-[18px] shrink-0 bg-[#f0f0f0] pb-[2px]">
        <button aria-label="Data View" class="grid w-[15px] place-items-center border border-[#2f86c8] bg-[#cfe6f8]"><svg class="size-[10px]"><use href="#mapview"/></svg></button>
        <button aria-label="Layout View" class="grid w-[15px] place-items-center"><svg class="size-[10px]"><use href="#layview"/></svg></button>
        <span class="my-[2px] w-px bg-[#999]"></span>
        <button aria-label="Refresh" class="ml-[6px] grid w-[15px] place-items-center"><svg class="size-[10px]"><use href="#refresh"/></svg></button>
        <button aria-label="Pause Drawing" class="grid w-[15px] place-items-center"><svg class="size-[10px]"><use href="#pause"/></svg></button>
        <button aria-label="Scroll left" class="ml-[9px] grid w-[17px] place-items-center border border-[#aaa] bg-white"><svg class="h-[8px] w-[5px]" viewBox="0 0 5 8"><path d="M4.500 .5L1 4l3.500 3.500" fill="none" stroke="#555" stroke-width="1.300"/></svg></button>
        <div class="grid flex-1 place-items-center border-y border-[#bbb] bg-[#dcdcdc]"><svg class="h-[7px] w-[8px]" viewBox="0 0 8 7"><path d="M1 0v7M4 0v7M7 0v7" stroke="#555" stroke-width="1.500"/></svg></div>
        <button aria-label="Scroll right" class="mr-[17px] grid w-[17px] place-items-center border border-[#aaa] bg-white"><svg class="h-[8px] w-[5px]" viewBox="0 0 5 8"><path d="M.5 .5L4 4 .5 7.500" fill="none" stroke="#555" stroke-width="1.300"/></svg></button>
      </div>
    </section>

    <section aria-label="Catalog" class="flex w-[375px] shrink-0 flex-col bg-[#f0f0f0]">
      <div class="flex h-[20px] items-center bg-linear-to-r from-[#c0cddd] to-[#d9e6f5] pl-1">
        <h2 class="flex-1">Catalog</h2>
        <button aria-label="Pin" class="w-4"><svg class="h-3 w-3" viewBox="0 0 12 12"><path d="M3 1.500h6M4 1.500v5M7.500 1.500v5M2 7h8M6 7v4" fill="none" stroke="#000" stroke-width="1.200"/></svg></button>
        <button aria-label="Close" class="w-[15px]"><svg class="h-3 w-3" viewBox="0 0 12 12"><path d="M2 2l8 8M10 2l-8 8" stroke="#000" stroke-width="1.600"/></svg></button>
      </div>
      <div class="flex h-[26px] items-center pl-1">
        <div class="flex items-center" data-tools="yback:Back,v"></div>
        <div class="ml-[3px] flex items-center gap-px" data-tools="yfwd:Forward,yup:Up One Level,home:Home Folder,dbhome:Default Geodatabase"></div>
        <span class="h-[22px] w-px bg-[#999]"></span>
        <div class="ml-[9px] flex items-center gap-[2px]" data-tools="grid:View,v"></div>
        <span class="ml-[2px] h-[22px] w-px bg-[#999]"></span>
        <div class="ml-[7px] flex items-center" data-tools="connect:Connect To Folder"></div>
        <span class="ml-px h-[22px] w-px bg-[#999]"></span>
        <div class="ml-[7px] flex items-center" data-tools="ctree:Toggle Tree"></div>
        <span class="ml-px h-[22px] w-px bg-[#999]"></span>
        <div class="ml-[7px] flex items-center" data-tools="opts:Options"></div>
      </div>
      <div class="flex h-[25px] items-center pr-[4px] pl-[2px]">
        <label for="loc" class="w-[52px] text-[11px]">Location:</label>
        <div class="relative h-[22px] flex-1">
          <select id="loc" class="h-full w-full appearance-none border border-[#7a7a7a] bg-white pl-[22px]"><option>NuevoLeon_Rand_50_10000Meters.shp</option></select>
          <svg class="pointer-events-none absolute top-[2px] left-[3px] size-4"><use href="#shp"/></svg>
          <svg class="pointer-events-none absolute top-[7px] right-1 h-2 w-2" viewBox="0 0 8 8"><path d="M.5 2L4 6l3.500-4" fill="none" stroke="#444" stroke-width="1.500"/></svg>
        </div>
      </div>
      <div class="mr-[4px] mb-[5px] flex min-h-0 flex-1 flex-col border border-t-2 border-[#828790] bg-white">
        <div class="flex min-h-0 flex-1">
          <div class="min-w-0 flex-1 overflow-hidden" id="cat"></div>
          <div class="flex w-[17px] shrink-0 flex-col border-x border-[#aaa] bg-white">
            <button aria-label="Scroll up" class="grid h-[17px] place-items-center border-b border-[#aaa]"><svg class="h-[5px] w-[8px]" viewBox="0 0 8 5"><path d="M.5 4.500L4 1l3.500 3.500" fill="none" stroke="#555" stroke-width="1.300"/></svg></button>
            <div class="mt-[38px] grid h-[270px] place-items-center border-y border-[#aaa] bg-[#dcdcdc]"><svg class="h-[7px] w-[7px]" viewBox="0 0 7 7"><path d="M0 .5h7M0 3.500h7M0 6.500h7" stroke="#444"/></svg></div>
            <button aria-label="Scroll down" class="mt-auto grid h-[17px] place-items-center border-t border-[#aaa]"><svg class="h-[5px] w-[8px]" viewBox="0 0 8 5"><path d="M.5 .5L4 4 7.500 .5" fill="none" stroke="#555" stroke-width="1.300"/></svg></button>
          </div>
        </div>
        <div class="mr-[17px] flex h-[16px] border-y border-[#aaa]">
          <button aria-label="Scroll left" class="grid w-[17px] place-items-center border-r border-[#aaa]"><svg class="h-[8px] w-[5px]" viewBox="0 0 5 8"><path d="M4.500 .5L1 4l3.500 3.500" fill="none" stroke="#555" stroke-width="1.300"/></svg></button>
          <div class="ml-[10px] grid w-[283px] place-items-center border-x border-[#aaa] bg-[#dcdcdc]"><svg class="h-[7px] w-[8px]" viewBox="0 0 8 7"><path d="M1 0v7M4 0v7M7 0v7" stroke="#444" stroke-width="1.500"/></svg></div>
          <button aria-label="Scroll right" class="ml-auto grid w-[17px] place-items-center border-l border-[#aaa]"><svg class="h-[8px] w-[5px]" viewBox="0 0 5 8"><path d="M.5 .5L4 4 .5 7.500" fill="none" stroke="#555" stroke-width="1.300"/></svg></button>
        </div>
      </div>
    </section>
  </main>
  <div class="flex h-[21px] items-center justify-end bg-[#f0f0f0] pt-[2px] pr-[97px] whitespace-pre">-97.27  24.21 Decimal Degrees</div>

  <footer class="flex h-[40px] bg-black text-white">
    <button aria-label="Start" class="grid w-12 place-items-center"><svg class="size-4" viewBox="0 0 16 16" fill="#fff"><path d="M0 2.300l6.500-.9v6.100H0zM7.300 1.300L16 0v7.500H7.300zM0 8.300h6.500v6.200L0 13.600zM7.300 8.300H16V16l-8.700-1.300z"/></svg></button>
    <button aria-label="Task View" class="grid w-12 place-items-center"><svg class="h-4 w-5" viewBox="0 0 20 16" fill="none" stroke="#fff"><path d="M4.500 1.500h11v13h-11zM2.500 3.500h-2v9h2M17.500 3.500h2v9h-2" stroke-width="1.200"/></svg></button>
    <button aria-label="Chrome" class="mx-[7px] grid w-[40px] place-items-center border-b-2 border-[#76b9ed]"><svg class="size-[22px]" viewBox="0 0 22 22"><circle cx="11" cy="11" r="11" fill="#fbcc34"/><path d="M11 11L1.500 5.500A11 11 0 0 1 20.500 5.500H11z" fill="#dc4437"/><path d="M1.500 5.500A11 11 0 0 0 11 22L15.700 13.800 11 11 6.300 13.800z" fill="#1a9c58"/><circle cx="11" cy="11" r="5.500" fill="#fff"/><circle cx="11" cy="11" r="4.300" fill="#4688f4"/></svg></button>
    <button aria-label="Word" class="mr-[5px] ml-[2px] grid w-[40px] place-items-center border-b-2 border-[#76b9ed]"><svg class="size-[22px]" viewBox="0 0 22 22"><path d="M12 2h9.500v18H12z" fill="#fff" stroke="#2b579a"/><path d="M13 5.500h7M13 8.500h7M13 11.500h7M13 14.500h7M13 17.500h7" stroke="#2b579a"/><path d="M0 2.200L13 0v22L0 19.800z" fill="#2b579a"/><path d="M2.500 7.500l1.800 7 2.200-6.500 2.200 6.500 1.800-7" fill="none" stroke="#fff" stroke-width="1.500"/></svg></button>
    <button aria-label="ArcMap" class="grid w-12 place-items-center border-b-2 border-[#76b9ed] bg-[#333]"><svg class="size-[22px]"><use href="#arcmap"/></svg></button>
    <button aria-label="File Explorer" class="ml-px grid w-12 place-items-center border-b-2 border-[#76b9ed] bg-[#1b1b1b]"><svg class="size-[22px]" viewBox="0 0 22 22"><path d="M0 2h9l1.500 2H22v16H0z" fill="#fbe08a"/><path d="M0 2h9v2H0z" fill="#f2bf2a"/><path d="M4 20v-6q0-2 2-2h10q2 0 2 2v6h-4v-4H8v4z" fill="#3fa7dc"/></svg></button>
    <div class="ml-auto flex items-center gap-2">
      <svg class="size-4" viewBox="0 0 16 16"><circle cx="8" cy="8" r="6.500" fill="#3285c4"/><path d="M3 4q5-3 8 0l-3 5-4 2zM10 9l4-1-2 4z" fill="#6ac06a"/><circle cx="6" cy="5" r="2" fill="#dff4ff"/></svg>
      <svg class="size-4" viewBox="0 0 16 16"><path d="M1 9a7 7 0 0 1 13-2v3H9l-3 4q-4-1-5-5z" fill="#f5cc1c"/><path d="M3.500 9a4.500 4.500 0 0 1 8.500-1M6 10a2.500 2.500 0 0 1 4-2" fill="none" stroke="#554400" stroke-width=".8"/><path d="M7.500 9h7v6h-7z" fill="#b9b9b9" stroke="#555" stroke-width=".6"/></svg>
      <svg class="size-4" viewBox="0 0 16 16"><path d="M8 0q3 2 7 2 0 9-7 13Q1 11 1 2q4 0 7-2z" fill="#fff"/><path d="M8 0v15M1 7h14" stroke="#000"/><path d="M11 7l5 9H6z" fill="#f9c51c"/><path d="M11 10v3M11 14v1" stroke="#222"/></svg>
      <svg class="size-4" viewBox="0 0 16 16"><path d="M0 1h16v14H0z" fill="#2c3226"/><path d="M2 8q6-7 12-2v6H7q-4 0-5-4z" fill="#76b900"/><path d="M4 8q4-4 8 0-4 5-8 0z" fill="#2c3226"/><circle cx="8" cy="8" r="1.700" fill="#76b900"/></svg>
      <svg class="size-4" viewBox="0 0 16 16" fill="none" stroke="#fff"><path d="M3.500 5.500h7v9h-7zM4.500 .5h5v5h-5zM10 13l2 2 3-4M6 2.500h2"/></svg>
      <svg class="size-4" viewBox="0 0 16 16" fill="none" stroke="#fff"><path d="M.5 5.500h3l4-3.500v12l-4-3.500h-3zM9.500 6q1 2 0 4M11.500 4q2.500 4 0 8M13.500 2.500q3.500 5.500 0 11"/></svg>
      <div class="ml-1 w-12 text-center leading-[18px]">6:47 PM<br>8/5/2018</div>
      <span class="h-[40px] w-[5px] border-l border-[#444]"></span>
    </div>
  </footer>
</div>

<script>
  const icon = id => `<svg class="size-4 shrink-0"><use href="#${id}"/></svg>`;
  const styles = {
    on: 'grid size-[22px] shrink-0 place-items-center border border-[#0078d7] bg-[#cce4f7]',
    dis: 'grid size-[22px] shrink-0 place-items-center border border-[#9db4c8] bg-[#dce6ee]',
    plain: 'grid size-[22px] shrink-0 place-items-center',
  };
  const fixed = {
    grip: '<span class="flex w-[6px] shrink-0 justify-center"><span class="h-4 w-0 border-l-2 border-dotted border-[#b0b0b0]"></span></span>',
    '|': '<span class="flex w-[6px] shrink-0 justify-center"><span class="h-4 w-px bg-[#c0c0c0]"></span></span>',
    v: '<button aria-label="More" class="grid w-[11px] shrink-0 place-items-center"><svg class="h-[3px] w-[5px]" viewBox="0 0 5 3"><path d="M0 0h5L2.500 3z"/></svg></button>',
    vdis: '<button aria-label="More" class="grid w-[11px] shrink-0 place-items-center"><svg class="h-[3px] w-[5px]" viewBox="0 0 5 3"><path d="M0 0h5L2.500 3z" fill="#888"/></svg></button>',
    over: '<button aria-label="Toolbar Options" class="ml-auto flex h-[26px] w-[13px] shrink-0 items-end border-l-2 border-transparent bg-linear-to-b from-[#f4f4f4] to-[#a8a8a8] bg-clip-padding pb-1 pl-[3px]"><svg class="h-[6px] w-[5px]" viewBox="0 0 5 6"><path d="M0 0h5v1H0zM0 3h5L2.500 6z"/></svg></button>',
    more: '<button aria-label="More Buttons" class="ml-auto flex h-[26px] w-[13px] shrink-0 flex-col justify-between border-l-2 border-transparent bg-linear-to-b from-[#f4f4f4] to-[#a8a8a8] bg-clip-padding pt-1 pb-1 pl-[3px]"><svg class="h-[5px] w-[6px]" viewBox="0 0 6 5"><path d="M0 0l3 2.500L0 5zM3 0l3 2.500L3 5z"/></svg><svg class="h-[6px] w-[5px]" viewBox="0 0 5 6"><path d="M0 0h5v1H0zM0 3h5L2.500 6z"/></svg></button>',
  };
  document.querySelectorAll('[data-tools]').forEach(bar => {
    bar.innerHTML = bar.dataset.tools.split(',').map(t => {
      if (fixed[t]) return fixed[t];
      const [id, label, state = 'plain'] = t.split(':');
      return `<button aria-label="${label}" class="${styles[state]}">${icon(id)}</button>`;
    }).join('');
  });

  const box = s => s === ' ' ? '<span class="w-[9px] shrink-0"></span>' :
    `<svg class="size-[9px] shrink-0" viewBox="0 0 9 9"><path d="M.5 .5h8v8h-8z" fill="#e8e8e8" stroke="#919191"/><path d="${s === '+' ? 'M2 4.500h5M4.500 2v5' : 'M2 4.500h5'}" stroke="#222"/></svg>`;

  const toc = [
    [0, 'layers', '<b>Layers</b>'], [1, 'folder', 'S:\\GISProgramming\\Module11\\Results'],
    [2, 'check', 'NuevoLeon_Rand_50'], [3, 'dot'], [2, 'check', 'NuevoLeon_Rand_50_10000Meters'],
    [3, 'green'], [1, 'folder', 'S:\\GISProgramming\\Module11\\Data'], [2, 'check', 'NuevoLeon', 1], [3, 'yellow'],
  ];
  const pads = ['pl-2', 'pl-[27px]', 'pl-[46px]', 'pl-[78px]'];
  const swatch = {
    dot: '<svg class="ml-[2px] size-[7px]" viewBox="0 0 7 7"><path d="M3.500 0L7 3.500 3.500 7 0 3.500z" fill="#5c0f22"/></svg>',
    green: '<span class="h-[11px] w-[15px] border border-[#6e8070] bg-[#ccfcd0]"></span>',
    yellow: '<span class="h-[11px] w-[15px] border border-[#f3bfae] bg-[#ffffb3]"></span>',
  };
  document.getElementById('toc').innerHTML = toc.map(([lvl, kind, text, sel], i) => {
    if (swatch[kind]) return `<div class="flex h-[18px] items-center ${pads[lvl]}">${swatch[kind]}</div>`;
    const body = kind === 'check'
      ? `<span class="relative ml-[8px] size-[11px] shrink-0"><input type="checkbox" checked id="l${i}" class="block size-[11px] appearance-none border border-black bg-white"><svg class="pointer-events-none absolute inset-0 size-[11px]" viewBox="0 0 11 11"><path d="M2.500 5l2 2.500 4-5" fill="none" stroke="#000" stroke-width="1.600"/></svg></span><label for="l${i}" class="${sel ? 'ml-[6px] border border-dotted border-black bg-[#0078d7] px-px leading-[16px] text-white' : 'ml-[8px]'}">${text}</label>`
      : `<svg class="ml-[7px] size-4 shrink-0"><use href="#${kind}"/></svg><span class="ml-1">${text}</span>`;
    return `<div class="flex h-[18px] items-center whitespace-nowrap ${pads[lvl]}">${box('-')}${body}</div>`;
  }).join('');

  const cat = [
    [1, '+', 'folder', 'Web Maps'], [1, '+', 'dbhome', '<b>Default</b>'], [1, '+', 'db', 'scratch'], [1, '+', 'tbx', 'Toolbox'],
    [0, '-', 'fconns', 'Folder Connections'], [1, '+', 'fconn', 'S:\\Apps for Arch GIS'],
    [1, '+', 'fconn', 'S:\\Apps for Arch GIS\\Module2_Queries\\Mod2Data\\Mod2'],
    [1, '+', 'fconn', 'S:\\Apps for Arch GIS\\Module3_Ethics\\Work'], [1, '+', 'fconn', 'S:\\Apps for Arch GIS\\Module7_Surface'],
    [1, '-', 'fconn', 'S:\\GISProgramming'], [2, '+', 'folder', 'Module1'], [2, '+', 'folder', 'Module10'], [2, '-', 'folder', 'Module11'],
    [3, '-', 'folder', 'Data'], [4, '-', 'folder', 'Mod11Toolbox'], [5, '+', 'folder', 'Results'], [5, '-', 'tbx', 'Mod11Assignment'],
    [6, ' ', 'script', 'AZajac_Mod11_RandomBufferTool'], [5, ' ', 'html', 'AZajac_Mod11_RandomBufferTool'], [4, ' ', 'shp', 'NuevoLeon'],
    [3, '+', 'folder', 'Random'], [3, '-', 'folder', 'Results'], [4, ' ', 'shppt', 'NuevoLeon_Rand_50'],
    [4, ' ', 'shp', 'NuevoLeon_Rand_50_10000Meters', 1], [3, '+', 'folder', 'Scripts'], [2, '+', 'folder', 'Module12'],
    [2, '+', 'folder', 'Module2'], [2, '+', 'folder', 'Module3'], [2, '+', 'folder', 'Module4'],
  ];
  const cpads = ['-ml-[3px]', 'ml-4', 'ml-[35px]', 'ml-[54px]', 'ml-[73px]', 'ml-[92px]', 'ml-[111px]'];
  document.getElementById('cat').innerHTML = cat.map(([lvl, s, ic, text, sel]) =>
    `<div class="flex h-[17px] items-center whitespace-nowrap ${cpads[lvl]}">${box(s)}<svg class="ml-[6px] size-4 shrink-0"><use href="#${ic}"/></svg><span class="${sel ? 'ml-[3px] bg-[#f0f0f0] px-[2px]' : 'ml-[5px]'}">${text}</span></div>`).join('');

  const points = [[570,155],[496,213],[541,212],[587,240],[590,259],[507,263],[563,271],[550,275],[477,285],[599,284],[529,295],[459,303],[485,304],[471,310],[651,308],[586,314],[516,335],[603,346],[589,336],[575,333],[700,333],[569,363],[557,353],[538,372],[527,363],[472,361],[647,371],[671,376],[689,384],[707,402],[579,396],[594,401],[614,410],[486,421],[552,444],[475,464],[510,465],[522,467],[513,485],[479,499],[481,483],[502,506],[560,516],[510,549],[522,535],[580,539],[566,557],[537,576],[559,585],[516,590]];
  const rings = points.map(([x, y]) => `<ellipse cx="${x + .5}" cy="${y + .5}" rx="11" ry="10"/>`).join('');
  document.getElementById('outer').innerHTML = rings;
  document.getElementById('inner').innerHTML = rings;
  document.getElementById('dots').innerHTML = points.map(([x, y]) => `<path d="M${x} ${y - 2.5}l2.500 2.500-2.500 2.500-2.500-2.500z"/>`).join('');
</script>
</body>
</html>
